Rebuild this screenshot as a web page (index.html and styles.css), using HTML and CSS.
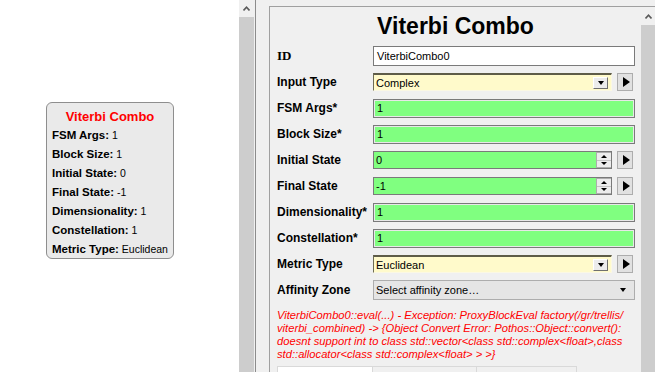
FILE: index.html
```html
<!DOCTYPE html>
<html lang="en">
<head>
    <meta charset="UTF-8">
    <title>Viterbi Combo - Properties</title>
    <link rel="stylesheet" href="styles.css">
</head>
<body>
    <div class="app">
        <!-- flow graph canvas -->
        <div class="canvas">
            <div class="node">
                <div class="node-title">Viterbi Combo</div>
                <div class="node-row"><b>FSM Args:</b> 1</div>
                <div class="node-row"><b>Block Size:</b> 1</div>
                <div class="node-row"><b>Initial State:</b> 0</div>
                <div class="node-row"><b>Final State:</b> -1</div>
                <div class="node-row"><b>Dimensionality:</b> 1</div>
                <div class="node-row"><b>Constellation:</b> 1</div>
                <div class="node-row"><b>Metric Type:</b> Euclidean</div>
            </div>
        </div>

        <div class="vscroll vscroll-left">
            <div class="scroll-btn">
                <svg width="7" height="5" viewBox="0 0 7 5"><path d="M0.5 4.5 L3.5 1.2 L6.5 4.5" stroke="#5a5a5a" stroke-width="1.6" fill="none"/></svg>
            </div>
            <div class="scroll-track"></div>
        </div>
        <div class="splitter"></div>

        <!-- properties editor -->
        <div class="dock">
            <div class="panel">
                <div class="panel-body">
                    <h1 class="title">Viterbi Combo</h1>

                    <div class="form">
                        <label class="lbl lbl-id">ID</label>
                        <div class="field plain">ViterbiCombo0</div>

                        <label class="lbl">Input Type</label>
                        <div class="field-wrap">
                            <div class="combo"><span class="combo-text">Complex</span><span class="drop-btn"><i class="tri-down"></i></span></div>
                            <span class="play-btn"><i class="tri-right"></i></span>
                        </div>

                        <label class="lbl">FSM Args*</label>
                        <div class="field green">1</div>

                        <label class="lbl">Block Size*</label>
                        <div class="field green">1</div>

                        <label class="lbl">Initial State</label>
                        <div class="field-wrap">
                            <div class="spin"><span class="spin-text">0</span><span class="spin-btns"><span class="spin-up"><i class="tri-up-s"></i></span><span class="spin-down"><i class="tri-down-s"></i></span></span></div>
                            <span class="play-btn"><i class="tri-right"></i></span>
                        </div>

                        <label class="lbl">Final State</label>
                        <div class="field-wrap">
                            <div class="spin"><span class="spin-text">-1</span><span class="spin-btns"><span class="spin-up"><i class="tri-up-s"></i></span><span class="spin-down"><i class="tri-down-s"></i></span></span></div>
                            <span class="play-btn"><i class="tri-right"></i></span>
                        </div>

                        <label class="lbl">Dimensionality*</label>
                        <div class="field green">1</div>

                        <label class="lbl">Constellation*</label>
                        <div class="field green">1</div>

                        <label class="lbl">Metric Type</label>
                        <div class="field-wrap">
                            <div class="combo"><span class="combo-text">Euclidean</span><span class="drop-btn"><i class="tri-down"></i></span></div>
                            <span class="play-btn"><i class="tri-right"></i></span>
                        </div>

                        <label class="lbl">Affinity Zone</label>
                        <div class="field select">Select affinity zone…<i class="tri-down select-arrow"></i></div>
                    </div>

                    <div class="error">ViterbiCombo0::eval(...) - Exception: ProxyBlockEval factory(/gr/trellis/<br>viterbi_combined) -&gt; {Object Convert Error: Pothos::Object::convert():<br>doesnt support int to class std::vector&lt;class std::complex&lt;float&gt;,class<br>std::allocator&lt;class std::complex&lt;float&gt; &gt; &gt;}</div>

                    <div class="tabs">
                        <div class="tab active"></div>
                        <div class="tab t2"></div>
                        <div class="tab t3"></div>
                    </div>
                </div>

                <div class="vscroll vscroll-right">
                    <div class="scroll-btn">
                        <svg width="7" height="5" viewBox="0 0 7 5"><path d="M0.5 4.5 L3.5 1.2 L6.5 4.5" stroke="#5a5a5a" stroke-width="1.6" fill="none"/></svg>
                    </div>
                    <div class="scroll-track"></div>
                </div>
            </div>
        </div>
    </div>
</body>
</html>
```

FILE: styles.css
```css
body {
    margin: 0;
    padding: 0;
    font-family: 'Liberation Sans', Arial, sans-serif;
    color: #000;
    overflow: hidden;
}

.app {
    display: flex;
    height: 372px;
    width: 655px;
}

/* canvas with the block */
.canvas {
    width: 239px;
    background-color: #fff;
    position: relative;
}

.node {
    position: absolute;
    left: 46px;
    top: 102px;
    width: 128px;
    height: 157px;
    box-sizing: border-box;
    padding: 4px 0 0 5px;
    background-color: #eaeaea;
    border: 1px solid #8e8e8e;
    border-radius: 6px;
}

.node-title {
    color: #ff0000;
    font-weight: bold;
    font-size: 13px;
    line-height: 19px;
    text-align: center;
    margin-left: -5px;
}

.node-row {
    font-size: 10.5px;
    line-height: 19px;
    white-space: nowrap;
}

.node-row b {
    font-size: 11.5px;
}

/* scrollbars */
.vscroll {
    display: flex;
    flex-direction: column;
    background-color: #cdcdcd;
}

.vscroll-left {
    width: 15px;
}

.vscroll-left .scroll-btn {
    height: 17px;
}

.vscroll-right {
    width: 14px;
}

.vscroll-right .scroll-btn {
    height: 18px;
}

.scroll-btn {
    background-color: #f0f0f0;
    display: flex;
    align-items: center;
    justify-content: center;
}

.scroll-track {
    flex: 1;
}

.splitter {
    width: 1px;
    background-color: #f0f0f0;
    border-right: 1px solid #8c8c8c;
}

/* properties dock */
.dock {
    flex: 1;
    background-color: #f0f0f0;
    padding: 6px 0 0 13px;
    display: flex;
}

.panel {
    flex: 1;
    display: flex;
    border-left: 1px solid #a0a0a0;
    border-top: 1px solid #a0a0a0;
}

.panel-body {
    flex: 1;
    overflow: hidden;
}

.title {
    margin: 0;
    height: 36px;
    line-height: 38px;
    font-size: 23px;
    font-weight: bold;
    text-align: center;
}

.form {
    display: grid;
    grid-template-columns: 96px 262px;
    grid-auto-rows: 26px;
    align-items: center;
    margin-left: 7px;
}

.lbl {
    font-size: 12px;
    font-weight: bold;
    white-space: nowrap;
}

.lbl-id {
    font-family: 'Liberation Serif', 'Times New Roman', serif;
    font-size: 13px;
}

.field {
    box-sizing: border-box;
    height: 20px;
    line-height: 18px;
    font-size: 11px;
    padding-left: 3px;
    border: 1px solid #7a7a7a;
    white-space: nowrap;
}

.plain {
    background-color: #fff;
}

.green {
    background-color: #80ff80;
    height: 19px;
    line-height: 17px;
    box-shadow: inset 1px 1px 0 #e8e8e8, inset -1px -1px 0 #e8e8e8;
}

.select {
    background-color: #e5e5e5;
    border-color: #adadad;
    position: relative;
    padding-left: 2px;
}

.select-arrow {
    position: absolute;
    right: 8px;
    top: 7px;
}

.field-wrap {
    display: flex;
    align-items: center;
    gap: 5px;
    padding-right: 2px;
}

.combo {
    flex: 1;
    box-sizing: border-box;
    height: 18px;
    display: flex;
    align-items: center;
    background-color: #fffacb;
    border-style: solid;
    border-width: 2px 1px 1px 1px;
    border-color: #5e5c48 #fbf8e4 #fbf8e4 #6e6c55;
    font-size: 11px;
}

.combo-text {
    flex: 1;
    padding-left: 2px;
}

.drop-btn {
    width: 15px;
    height: 12px;
    margin-right: 3px;
    box-sizing: border-box;
    background-color: #ececec;
    border: 1px solid;
    border-color: #fff #6f6f6f #6f6f6f #fff;
    display: flex;
    align-items: center;
    justify-content: center;
}

.spin {
    flex: 1;
    box-sizing: border-box;
    height: 18px;
    display: flex;
    align-items: center;
    background-color: #80ff80;
    border: 1px solid #7a7a7a;
    font-size: 11px;
}

.spin-text {
    flex: 1;
    padding-left: 2px;
}

.spin-btns {
    width: 15px;
    height: 16px;
    box-sizing: border-box;
    display: flex;
    flex-direction: column;
    border: 1px solid #adadad;
    border-right: none;
    background-color: #ececec;
}

.spin-up, .spin-down {
    flex: 1;
    display: flex;
    align-items: center;
    justify-content: center;
}

.spin-up {
    border-bottom: 1px solid #c4c4c4;
}

.play-btn {
    width: 16px;
    height: 18px;
    box-sizing: border-box;
    background-color: #e1e1e1;
    border: 1px solid #adadad;
    display: flex;
    align-items: center;
    justify-content: center;
}

/* little triangles */
.tri-down {
    display: block;
    width: 0;
    height: 0;
    border-left: 3.5px solid transparent;
    border-right: 3.5px solid transparent;
    border-top: 4px solid #000;
}

.tri-right {
    display: block;
    width: 0;
    height: 0;
    margin-left: 2px;
    border-top: 5px solid transparent;
    border-bottom: 5px solid transparent;
    border-left: 7px solid #000;
}

.tri-up-s {
    display: block;
    width: 0;
    height: 0;
    border-left: 3px solid transparent;
    border-right: 3px solid transparent;
    border-bottom: 3px solid #000;
}

.tri-down-s {
    display: block;
    width: 0;
    height: 0;
    border-left: 3px solid transparent;
    border-right: 3px solid transparent;
    border-top: 3px solid #000;
}

.error {
    margin: 6px 0 0 7px;
    color: #ff0000;
    font-style: italic;
    font-size: 11.2px;
    line-height: 13px;
    white-space: nowrap;
}

.tabs {
    display: flex;
    margin: 5px 0 0 7px;
}

.tab {
    height: 20px;
    box-sizing: border-box;
    border: 1px solid #d9d9d9;
    border-bottom: none;
    background-color: #f0f0f0;
}

.tab.active {
    width: 96px;
    background-color: #fff;
}

.tab.t2 {
    width: 104px;
    border-left: none;
}

.tab.t3 {
    width: 100px;
    border-left: none;
}
```
